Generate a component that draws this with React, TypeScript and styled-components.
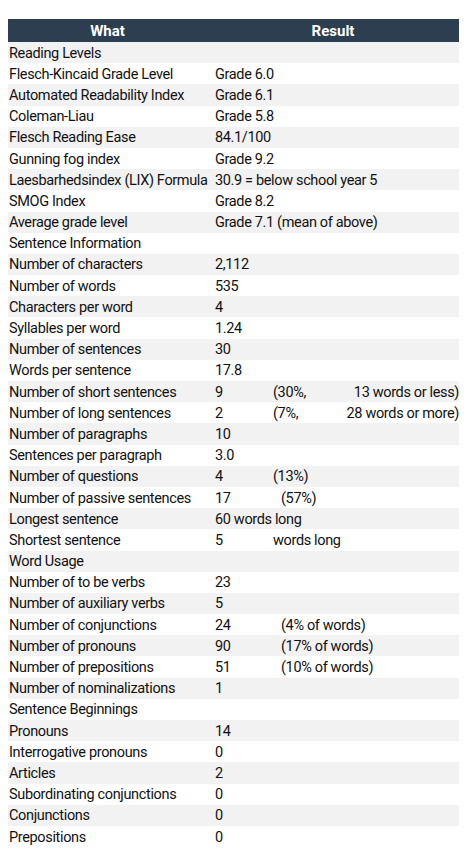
import React from 'react';
import styled, { createGlobalStyle } from 'styled-components';

const GlobalStyle = createGlobalStyle`
  body {
    margin: 0;
    background: #ffffff;
    font-family: Roboto, "Liberation Sans", sans-serif;
    color: #111111;
  }
`

const Page = styled.div`
  width: 474px;
  padding: 0 15px 0 8px;
  box-sizing: border-box;
`

// only the descenders of the page title peek in above the table
const TitleClip = styled.div`
  height: 19px;
  overflow: hidden;
`

const Title = styled.h1`
  margin: -31px 0 0 0;
  padding-left: 36px;
  font-size: 26px;
  line-height: 34px;
  font-weight: bold;
  text-align: center;
  white-space: nowrap;
  color: #000000;
`

const Table = styled.div`
  display: flex;
  flex-direction: column;
`

const HeadRow = styled.div`
  display: grid;
  grid-template-columns: 199px 1fr;
  height: 23px;
  align-items: center;
  background: #2c3e50;
  color: #ffffff;
  font-weight: bold;
  font-size: 15px;
`

const HeadCell = styled.div`
  text-align: center;
`

const Row = styled.div<{ $shade: boolean }>`
  display: grid;
  grid-template-columns: 206px 1fr;
  height: 21.2px;
  padding-top: 1px;
  box-sizing: border-box;
  align-items: center;
  background: ${p => (p.$shade ? '#f2f2f2' : '#ffffff')};
  font-size: 14.5px;
  letter-spacing: -0.35px;
  white-space: nowrap;
`

const Label = styled.div`
  padding-left: 1px;
`

const Value = styled.div`
  display: grid;
  grid-template-columns: 58px 1fr;
  padding-left: 1px;
`

const Note = styled.div<{ $shift: number }>`
  display: flex;
  justify-content: space-between;
  padding-left: ${p => p.$shift}px;
`

interface Item {
  label: string;
  value?: string;
  note?: string;
  tail?: string;
  shift?: number;
}

const items: Item[] = [
  { label: 'Reading Levels' },
  { label: 'Flesch-Kincaid Grade Level', value: 'Grade 6.0' },
  { label: 'Automated Readability Index', value: 'Grade 6.1' },
  { label: 'Coleman-Liau', value: 'Grade 5.8' },
  { label: 'Flesch Reading Ease', value: '84.1/100' },
  { label: 'Gunning fog index', value: 'Grade 9.2' },
  { label: 'Laesbarhedsindex (LIX) Formula', value: '30.9 = below school year 5' },
  { label: 'SMOG Index', value: 'Grade 8.2' },
  { label: 'Average grade level', value: 'Grade 7.1 (mean of above)' },
  { label: 'Sentence Information' },
  { label: 'Number of characters', value: '2,112' },
  { label: 'Number of words', value: '535' },
  { label: 'Characters per word', value: '4' },
  { label: 'Syllables per word', value: '1.24' },
  { label: 'Number of sentences', value: '30' },
  { label: 'Words per sentence', value: '17.8' },
  { label: 'Number of short sentences', value: '9', note: '(30%,', tail: '13 words or less)' },
  { label: 'Number of long sentences', value: '2', note: '(7%,', tail: '28 words or more)' },
  { label: 'Number of paragraphs', value: '10' },
  { label: 'Sentences per paragraph', value: '3.0' },
  { label: 'Number of questions', value: '4', note: '(13%)' },
  { label: 'Number of passive sentences', value: '17', note: '(57%)', shift: 8 },
  { label: 'Longest sentence', value: '60 words long' },
  { label: 'Shortest sentence', value: '5', note: 'words long' },
  { label: 'Word Usage' },
  { label: 'Number of to be verbs', value: '23' },
  { label: 'Number of auxiliary verbs', value: '5' },
  { label: 'Number of conjunctions', value: '24', note: '(4% of words)', shift: 8 },
  { label: 'Number of pronouns', value: '90', note: '(17% of words)', shift: 8 },
  { label: 'Number of prepositions', value: '51', note: '(10% of words)', shift: 8 },
  { label: 'Number of nominalizations', value: '1' },
  { label: 'Sentence Beginnings' },
  { label: 'Pronouns', value: '14' },
  { label: 'Interrogative pronouns', value: '0' },
  { label: 'Articles', value: '2' },
  { label: 'Subordinating conjunctions', value: '0' },
  { label: 'Conjunctions', value: '0' },
  { label: 'Prepositions', value: '0' },
]

const App: React.FC = () => {
  return (
    <Page>
      <GlobalStyle />
      <TitleClip>
        <Title>Text Readability, Summary</Title>
      </TitleClip>
      <Table>
        <HeadRow>
          <HeadCell>What</HeadCell>
          <HeadCell>Result</HeadCell>
        </HeadRow>
        {items.map((it, i) => (
          <Row key={i} $shade={i % 2 === 0}>
            <Label>{it.label}</Label>
            {it.note ? (
              <Value>
                <span>{it.value}</span>
                <Note $shift={it.shift ?? 0}>
                  <span>{it.note}</span>
                  {it.tail && <span>{it.tail}</span>}
                </Note>
              </Value>
            ) : (
              <Label>{it.value}</Label>
            )}
          </Row>
        ))}
      </Table>
    </Page>
  )
}

export default App;
